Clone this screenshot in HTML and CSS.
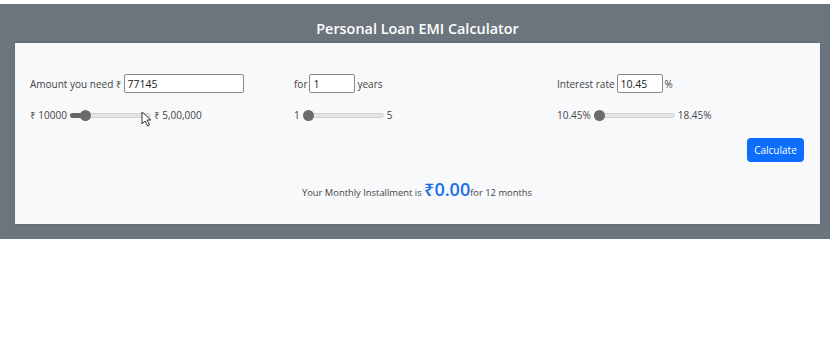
FILE: index.html
```html
<!DOCTYPE html>
<html lang="en">
<head>
<meta charset="utf-8">
<title>Personal Loan EMI Calculator</title>
<link rel="stylesheet" href="styles.css">
</head>
<body>
<div class="page">
  <div class="panel">
    <h1 class="title">Personal Loan EMI Calculator</h1>
    <div class="card">
      <div class="grid">
        <div class="field">
          <label class="lbl">Amount you need ₹</label>
          <input class="box box-wide" type="text" value="77145">
        </div>
        <div class="field">
          <label class="lbl">for</label>
          <input class="box box-small" type="text" value="1">
          <span class="lbl">years</span>
        </div>
        <div class="field">
          <label class="lbl">Interest rate</label>
          <input class="box box-small" type="text" value="10.45">
          <span class="lbl">%</span>
        </div>

        <div class="range-row">
          <span class="lbl">₹ 10000</span>
          <div class="slider">
            <div class="fill" style="width:14px"></div>
            <div class="thumb" style="left:9px"></div>
            <svg class="cursor" width="12" height="16" viewBox="0 0 12 16"><path d="M1 1 L1 13 L4 10 L6.5 15 L8.5 14 L6 9 L10 9 Z" fill="#fff" stroke="#333" stroke-width="1"/></svg>
          </div>
          <span class="lbl">₹ 5,00,000</span>
        </div>
        <div class="range-row">
          <span class="lbl">1</span>
          <div class="slider">
            <div class="thumb" style="left:-1px"></div>
          </div>
          <span class="lbl">5</span>
        </div>
        <div class="range-row">
          <span class="lbl">10.45%</span>
          <div class="slider">
            <div class="thumb" style="left:-1px"></div>
          </div>
          <span class="lbl">18.45%</span>
        </div>
      </div>
      <div class="actions">
        <button class="btn" type="button">Calculate</button>
      </div>
      <p class="result">Your Monthly Installment is <span class="amount">₹0.00</span>for 12 months</p>
    </div>
  </div>
</div>
</body>
</html>
```
FILE: styles.css
```css
* { box-sizing: border-box; }
html, body { margin: 0; padding: 0; background: #fff; }
body {
  font-family: "Open Sans", "Noto Sans", "DejaVu Sans", sans-serif;
  color: #444;
}
.page { padding-top: 4px; }
.panel {
  background: #6c757d;
  padding: 0 10px 15px 15px;
}
.title {
  margin: 0;
  height: 39px;
  padding-top: 15px;
  text-align: center;
  color: #fff;
  font-size: 14.4px;
  line-height: 20px;
  font-weight: 600;
}
.card {
  background: #f8f9fb;
  height: 181px;
  padding: 31px 16px 0 15px;
  box-shadow: 0 0 2px rgba(0,0,0,0.15);
}
.grid {
  display: grid;
  grid-template-columns: 264px 263px 1fr;
  row-gap: 15px;
}
.field, .range-row {
  display: flex;
  align-items: center;
  gap: 2px;
  font-size: 10px;
}
.range-row { gap: 3px; }
.field { height: 19px; }
.range-row { height: 14px; }
.lbl { color: #444; white-space: nowrap; }
.box {
  height: 19px;
  border: 1px solid #8a8a8a;
  border-radius: 2px;
  background: #fff;
  font: inherit;
  font-size: 10.5px;
  color: #222;
  padding: 0 3px;
}
.box-wide { width: 120px; }
.box-small { width: 46px; }
.slider {
  position: relative;
  width: 81px;
  height: 5px;
  border-radius: 3px;
  background: #e4e4e4;
  border: 1px solid #d4d4d4;
}
.fill {
  position: absolute;
  left: -1px; top: -1px;
  height: 5px;
  border-radius: 3px;
  background: #666;
}
.thumb {
  position: absolute;
  top: -4px;
  width: 11px;
  height: 11px;
  border-radius: 50%;
  background: #6b6b6b;
}
.cursor {
  position: absolute;
  left: 70px;
  top: -3px;
}
.actions {
  display: flex;
  justify-content: flex-end;
  margin-top: 16px;
}
.btn {
  width: 57px;
  height: 24px;
  border: none;
  border-radius: 4px;
  background: #0d6efd;
  color: #fff;
  font: inherit;
  font-size: 10px;
  padding: 0;
}
.result {
  margin: 15px 0 0;
  text-align: center;
  font-size: 9.4px;
  color: #444;
}
.amount {
  color: #1a6ee8;
  font-size: 18px;
  font-weight: 600;
}
```
